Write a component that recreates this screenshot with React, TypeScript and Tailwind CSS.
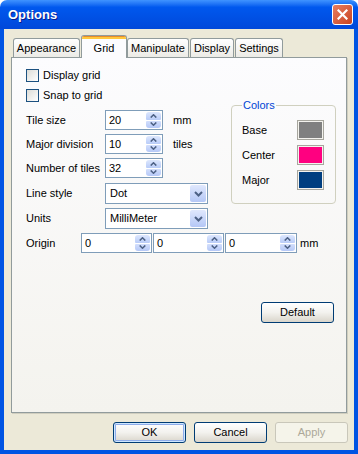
import React from 'react';

const Spin = () => (
  <div className="flex flex-col w-[15px] h-full gap-px">
    <div className="flex-1 flex items-center justify-center rounded-t-[3px] rounded-b-[1px] bg-linear-to-b from-[#DDE7FD] to-[#B9CCF8]">
      <svg width="7" height="4" viewBox="0 0 7 4">
        <polyline points="0.7,3.6 3.5,0.8 6.3,3.6" fill="none" stroke="#4D6185" strokeWidth="1.5" />
      </svg>
    </div>
    <div className="flex-1 flex items-center justify-center rounded-b-[3px] rounded-t-[1px] bg-linear-to-b from-[#D3DFFC] to-[#B5C8F7]">
      <svg width="7" height="4" viewBox="0 0 7 4">
        <polyline points="0.7,0.4 3.5,3.2 6.3,0.4" fill="none" stroke="#4D6185" strokeWidth="1.5" />
      </svg>
    </div>
  </div>
);

const NumberBox = ({ value, w }: { value: string; w: string }) => (
  <div className={`flex h-[20px] ${w} border border-[#7F9DB9] bg-white p-px`}>
    <span className="flex-1 pl-[2px] leading-[16px]">{value}</span>
    <Spin />
  </div>
);

const Select = ({ value }: { value: string }) => (
  <div className="flex h-[21px] w-[103px] border border-[#7F9DB9] bg-white p-px">
    <span className="flex-1 pl-[3px] leading-[17px]">{value}</span>
    <div className="w-[16px] h-full flex items-center justify-center rounded-[2px] bg-linear-to-b from-[#E0E8FD] to-[#B4C7F6]">
      <svg width="9" height="6" viewBox="0 0 9 6">
        <polyline points="1,1 4.5,4.5 8,1" fill="none" stroke="#4D6185" strokeWidth="2" />
      </svg>
    </div>
  </div>
);

const Check = ({ label }: { label: string }) => (
  <div className="flex items-center h-[13px]">
    <div className="w-[13px] h-[13px] border border-[#1C5180] bg-linear-to-br from-[#DCDCD7] to-white" />
    <span className="ml-[4px]">{label}</span>
  </div>
);

const Btn = ({ label, primary, disabled }: { label: string; primary?: boolean; disabled?: boolean }) => (
  <div
    className={
      disabled
        ? 'w-[73px] h-[21px] flex items-center justify-center rounded-[3px] border border-[#C9C7BA] bg-[#F5F4EA] text-[#ACA899]'
        : `w-[73px] h-[21px] flex items-center justify-center rounded-[3px] border border-[#003C74] bg-linear-to-b from-white via-[#F3F2EE] to-[#D9D5CB] ${
            primary ? 'shadow-[inset_0_0_0_1px_#CEE7FF,inset_0_0_0_2px_#8FADEA]' : ''
          }`
    }
  >
    {label}
  </div>
);

const Swatch = ({ color }: { color: string }) => (
  <div className="w-[27px] h-[20px] border border-[#A7A69E] p-px bg-[#F4F3EE]">
    <div className={`w-full h-full ${color}`} />
  </div>
);

export default function App() {
  return (
    <div className="w-[358px] h-[454px] flex flex-col font-['Liberation_Sans',Arial,sans-serif] text-[11px] text-black">
      {/* Title bar */}
      <div className="h-[29px] flex items-center justify-between pl-[8px] pr-[5px] rounded-t-[7px] bg-linear-to-b from-[#3F93FF] from-0% via-[#0058EE] via-25% to-[#0048DA] to-100%">
        <span className="text-white font-bold text-[13px] [text-shadow:1px_1px_#0A1C8C]">Options</span>
        <div className="w-[21px] h-[21px] flex items-center justify-center rounded-[3px] border border-white bg-linear-to-br from-[#E87D5F] to-[#C8421E]">
          <svg width="11" height="11" viewBox="0 0 11 11">
            <path d="M1.5 1.5 L9.5 9.5 M9.5 1.5 L1.5 9.5" stroke="white" strokeWidth="2.2" strokeLinecap="square" />
          </svg>
        </div>
      </div>

      {/* Body */}
      <div className="flex-1 flex flex-col bg-[#ECE9D8] border-x-4 border-b-4 border-[#0054E3] px-[7px] pt-[5px] pb-[7px]">
        {/* Tabs */}
        <div className="flex items-end h-[23px] pl-[2px]">
          <div className="w-[67px] h-[19px] flex items-center justify-center pt-px border border-b-0 border-[#919B9C] rounded-t-[3px] bg-linear-to-b from-white to-[#ECEBE6]">Appearance</div>
          <div className="relative z-10 -mb-px ml-px w-[46px] h-[23px] flex flex-col border border-b-0 border-[#919B9C] rounded-t-[3px] bg-[#FCFCFE] overflow-hidden">
            <div className="h-px bg-[#E68B2C]" />
            <div className="h-[2px] bg-[#FFC83C]" />
            <span className="text-center mt-[1px]">Grid</span>
          </div>
          <div className="w-[62px] h-[19px] flex items-center justify-center pt-px border border-b-0 border-[#919B9C] rounded-t-[3px] bg-linear-to-b from-white to-[#ECEBE6]">Manipulate</div>
          <div className="ml-px w-[44px] h-[19px] flex items-center justify-center pt-px border border-b-0 border-[#919B9C] rounded-t-[3px] bg-linear-to-b from-white to-[#ECEBE6]">Display</div>
          <div className="ml-px w-[48px] h-[19px] flex items-center justify-center pt-px border border-b-0 border-[#919B9C] rounded-t-[3px] bg-linear-to-b from-white to-[#ECEBE6]">Settings</div>
        </div>

        {/* Panel */}
        <div className="flex-1 flex flex-col border border-[#919B9C] shadow-[1px_1px_0_#D0CEBF] bg-linear-to-b from-[#FCFCFE] to-[#F4F3EE]">
          <div className="flex">
            <div className="flex flex-col pl-[14px] pt-[11px]">
              <Check label="Display grid" />
              <div className="mt-[7px]">
                <Check label="Snap to grid" />
              </div>
              <div className="mt-[8px] flex items-center h-[20px]">
                <span className="w-[79px]">Tile size</span>
                <NumberBox value="20" w="w-[58px]" />
                <span className="ml-[10px]">mm</span>
              </div>
              <div className="mt-[4px] flex items-center h-[20px]">
                <span className="w-[79px]">Major division</span>
                <NumberBox value="10" w="w-[58px]" />
                <span className="ml-[10px]">tiles</span>
              </div>
              <div className="mt-[4px] flex items-center h-[20px]">
                <span className="w-[79px]">Number of tiles</span>
                <NumberBox value="32" w="w-[58px]" />
              </div>
              <div className="mt-[5px] flex items-center h-[21px]">
                <span className="w-[79px]">Line style</span>
                <Select value="Dot" />
              </div>
              <div className="mt-[4px] flex items-center h-[21px]">
                <span className="w-[79px]">Units</span>
                <Select value="MilliMeter" />
              </div>
            </div>

            <fieldset className="ml-auto mr-[10px] mt-[41px] self-start w-[105px] border border-[#D0D0BF] rounded-[4px] pl-[10px] pr-[11px] pt-[8px] pb-[13px]">
              <legend className="px-[1px] leading-[13px] text-[#0046D5]">Colors</legend>
              <div className="flex flex-col gap-[5px]">
                <div className="flex items-center justify-between h-[20px]">
                  <span>Base</span>
                  <Swatch color="bg-[#808080]" />
                </div>
                <div className="flex items-center justify-between h-[20px]">
                  <span>Center</span>
                  <Swatch color="bg-[#FF0080]" />
                </div>
                <div className="flex items-center justify-between h-[20px]">
                  <span>Major</span>
                  <Swatch color="bg-[#003E80]" />
                </div>
              </div>
            </fieldset>
          </div>

          <div className="mt-[4px] pl-[14px] flex items-center h-[20px]">
            <span className="w-[55px]">Origin</span>
            <div className="flex gap-px">
              <NumberBox value="0" w="w-[71px]" />
              <NumberBox value="0" w="w-[71px]" />
              <NumberBox value="0" w="w-[72px]" />
            </div>
            <span className="ml-[3px]">mm</span>
          </div>

          <div className="mt-[49px] flex justify-end pr-[12px]">
            <Btn label="Default" />
          </div>
        </div>

        {/* Buttons */}
        <div className="mt-[9px] flex justify-end gap-[8px] -mr-px">
          <Btn label="OK" primary />
          <Btn label="Cancel" />
          <Btn label="Apply" disabled />
        </div>
      </div>
    </div>
  );
}
